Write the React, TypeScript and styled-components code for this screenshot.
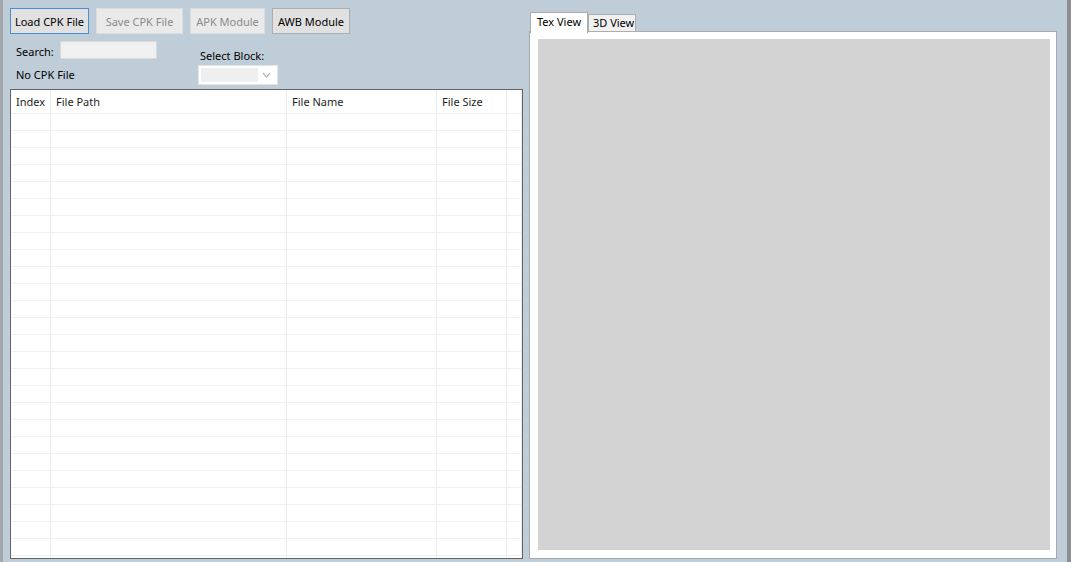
import styled, { createGlobalStyle } from "styled-components";

const GlobalStyle = createGlobalStyle`
  html, body {
    margin: 0;
    padding: 0;
    background: #bfcdd9;
    overflow: hidden;
  }
  * {
    box-sizing: border-box;
  }
`;

const Window = styled.div`
  display: flex;
  width: 1071px;
  height: 562px;
  background: #bfcdd9;
  border-left: 3px solid #a3a6aa;
  border-right: 4px solid #8c8e91;
  font-family: "Noto Sans", "DejaVu Sans", sans-serif;
  font-size: 11px;
  color: #000;
`;

const LeftPane = styled.div`
  display: flex;
  flex-direction: column;
  padding: 8px 0 0 7px;
  width: 519px;
`;

const Toolbar = styled.div`
  display: flex;
  gap: 7px;
  height: 26px;
`;

const Button = styled.button<{ $w: number; $focused?: boolean }>`
  width: ${(p) => p.$w}px;
  height: 26px;
  padding: 0;
  font: inherit;
  background: ${(p) => (p.disabled ? "#eaeaea" : "#e1e1e1")};
  color: ${(p) => (p.disabled ? "#8a8a8a" : "#000")};
  border: 1px solid
    ${(p) => (p.$focused ? "#4a8fd6" : p.disabled ? "#dcdcdc" : "#adadad")};
`;

const Controls = styled.div`
  display: flex;
  height: 55px;
`;

const SearchGroup = styled.div`
  display: flex;
  flex-direction: column;
  width: 188px;
  padding: 7px 0 0 6px;
`;

const SearchRow = styled.div`
  display: flex;
  align-items: center;
  height: 18px;
`;

const Label = styled.span`
  line-height: 16px;
  white-space: nowrap;
`;

const SearchLabel = styled(Label)`
  width: 44px;
  margin-top: 4px;
`;

const TextBox = styled.div`
  width: 97px;
  height: 18px;
  background: #f0f0f0;
  border: 1px solid #fafafa;
  outline: 1px solid #d9d9d9;
  outline-offset: -1px;
`;

const StatusLabel = styled(Label)`
  margin-top: 8px;
`;

const BlockGroup = styled.div`
  display: flex;
  flex-direction: column;
  padding-top: 14px;
`;

const BlockLabel = styled(Label)`
  padding-left: 2px;
  height: 16px;
`;

const Combo = styled.div`
  display: flex;
  align-items: center;
  width: 80px;
  height: 20px;
  margin-top: 1px;
  background: #fff;
  padding: 2px;
  border: 1px solid #e4e4e4;
`;

const ComboField = styled.div`
  flex: 1;
  height: 100%;
  background: #efefef;
`;

const Chevron = styled.svg`
  width: 17px;
  height: 14px;
`;

const Grid = styled.div`
  width: 513px;
  height: 470px;
  background: #fff;
  border: 1px solid #646464;
  overflow: hidden;
`;

const Row = styled.div<{ $header?: boolean }>`
  display: grid;
  grid-template-columns: 40px 236px 150px 70px 15px;
  height: ${(p) => (p.$header ? 24 : 17)}px;
  border-bottom: 1px solid ${(p) => (p.$header ? "#eaeff5" : "#f0f0f0")};
`;

const Cell = styled.div`
  border-right: 1px solid #ececec;
  padding-left: 5px;
  line-height: 23px;
  color: #1e1e1e;
  white-space: nowrap;
`;

const RightPane = styled.div`
  display: flex;
  flex-direction: column;
  margin-left: 7px;
  padding-top: 12px;
  width: 528px;
`;

const TabStrip = styled.div`
  display: flex;
  align-items: flex-end;
  height: 20px;
  position: relative;
  z-index: 1;
`;

const Tab = styled.div<{ $active?: boolean; $w: number }>`
  width: ${(p) => p.$w}px;
  height: ${(p) => (p.$active ? 21 : 18)}px;
  padding-left: ${(p) => (p.$active ? 6 : 4)}px;
  margin-left: ${(p) => (p.$active ? 1 : 0)}px;
  background: ${(p) => (p.$active ? "#fff" : "#f0f0f0")};
  border: 1px solid #adadad;
  border-bottom: ${(p) => (p.$active ? "none" : "1px solid #adadad")};
  line-height: ${(p) => (p.$active ? 18 : 16)}px;
  margin-bottom: ${(p) => (p.$active ? -1 : 0)}px;
  white-space: nowrap;
`;

const TabPanel = styled.div`
  width: 528px;
  height: 528px;
  margin-top: -1px;
  background: #fff;
  border: 1px solid #a9a9a9;
  padding: 7px 6px 8px 8px;
`;

const Viewport = styled.div`
  width: 100%;
  height: 100%;
  background: #d3d3d3;
`;

const columns = ["Index", "File Path", "File Name", "File Size", ""];

export default function App() {
  const rows = Array.from({ length: 27 }, (_, i) => i);
  return (
    <>
      <GlobalStyle />
      <Window>
        <LeftPane>
          <Toolbar>
            <Button $w={79} $focused>
              Load CPK File
            </Button>
            <Button $w={87} disabled>
              Save CPK File
            </Button>
            <Button $w={75} disabled>
              APK Module
            </Button>
            <Button $w={78}>AWB Module</Button>
          </Toolbar>
          <Controls>
            <SearchGroup>
              <SearchRow>
                <SearchLabel>Search:</SearchLabel>
                <TextBox />
              </SearchRow>
              <StatusLabel>No CPK File</StatusLabel>
            </SearchGroup>
            <BlockGroup>
              <BlockLabel>Select Block:</BlockLabel>
              <Combo>
                <ComboField />
                <Chevron viewBox="0 0 17 14">
                  <path
                    d="M5 5 L8.5 9 L12 5"
                    fill="none"
                    stroke="#b5b5b5"
                    strokeWidth="1.2"
                  />
                </Chevron>
              </Combo>
            </BlockGroup>
          </Controls>
          <Grid>
            <Row $header>
              {columns.map((c, i) => (
                <Cell key={i}>{c}</Cell>
              ))}
            </Row>
            {rows.map((r) => (
              <Row key={r}>
                {columns.map((_, i) => (
                  <Cell key={i} />
                ))}
              </Row>
            ))}
          </Grid>
        </LeftPane>
        <RightPane>
          <TabStrip>
            <Tab $active $w={58}>
              Tex View
            </Tab>
            <Tab $w={48}>3D View</Tab>
          </TabStrip>
          <TabPanel>
            <Viewport />
          </TabPanel>
        </RightPane>
      </Window>
    </>
  );
}
